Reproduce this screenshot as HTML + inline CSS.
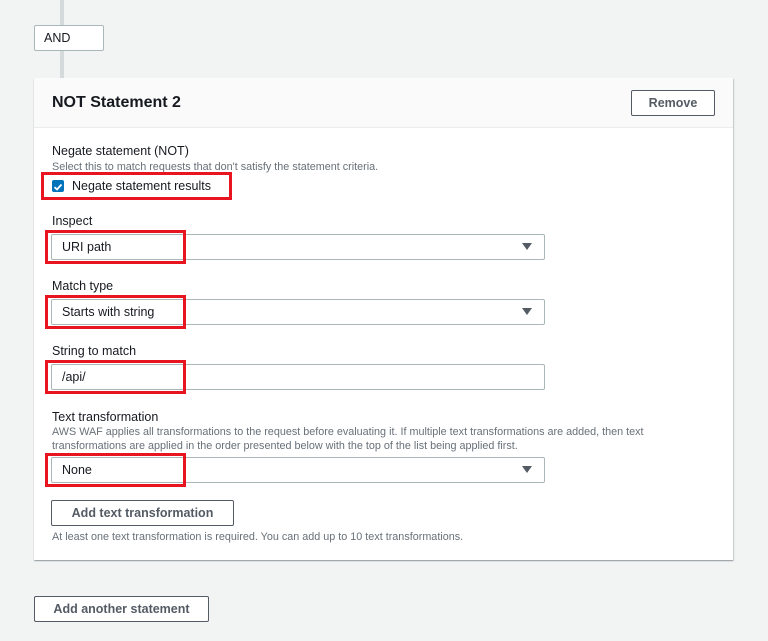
<!DOCTYPE html>
<html><head><meta charset="utf-8"><style>
*{box-sizing:border-box;margin:0;padding:0}
body{width:768px;height:641px;background:#f2f3f3;font-family:"Liberation Sans",sans-serif;color:#16191f;position:relative;overflow:hidden}
.a{position:absolute}
.btn{position:absolute;background:#fff;border:1px solid #545b64;border-radius:2px;font-weight:bold;color:#545b64;font-size:12.5px;text-align:center;line-height:25px}
.lbl{position:absolute;left:52px;font-size:12.5px;color:#16191f}
.desc{position:absolute;left:52px;font-size:10.8px;color:#687078;line-height:14px;white-space:nowrap}
.sel{position:absolute;left:51px;width:494px;height:26px;border:1px solid #aab7b8;border-radius:2px;background:#fff;font-size:12.5px;line-height:24px;padding-left:10px}
.arr{position:absolute;right:12px;top:8px;width:0;height:0;border-left:5px solid transparent;border-right:5px solid transparent;border-top:7px solid #545b64}
.red{position:absolute;border:3px solid #e8141f}
</style></head><body>
<div class="a" style="left:60px;top:0;width:4px;height:78px;background:#d5dbdb"></div>
<div class="a" style="left:34px;top:25px;width:70px;height:26px;background:#fff;border:1px solid #aab7b8;border-radius:2px;font-size:12.5px;line-height:24px;padding-left:9px">AND</div>
<div class="a" style="left:34px;top:78px;width:699px;height:482px;background:#fff;box-shadow:0 1px 1px rgba(0,28,36,.3),1px 1px 1px rgba(0,28,36,.15)">
<div class="a" style="left:0;top:0;width:699px;height:50px;background:#fafafa;border-bottom:1px solid #eaeded"></div>
<div class="a" style="left:18px;top:16px;font-size:16px;font-weight:bold">NOT Statement 2</div>
</div>
<div class="btn" style="left:631px;top:90px;width:84px;height:26px">Remove</div>
<div class="lbl" style="top:144px">Negate statement (NOT)</div>
<div class="desc" style="top:160px">Select this to match requests that don't satisfy the statement criteria.</div>
<div class="a" style="left:52px;top:180px;width:12px;height:12px;background:#0073bb;border-radius:2px"><svg width="12" height="12" viewBox="0 0 12 12"><path d="M2.5 6.2 L5 8.5 L9.5 3.5" stroke="#fff" stroke-width="1.8" fill="none"/></svg></div>
<div class="a" style="left:72px;top:179px;font-size:12.5px">Negate statement results</div>
<div class="red" style="left:41px;top:172px;width:191px;height:28px"></div>

<div class="lbl" style="top:214px">Inspect</div>
<div class="sel" style="top:234px">URI path<div class="arr"></div></div>
<div class="red" style="left:45px;top:230px;width:141px;height:34px"></div>

<div class="lbl" style="top:279px">Match type</div>
<div class="sel" style="top:299px">Starts with string<div class="arr"></div></div>
<div class="red" style="left:45px;top:295px;width:141px;height:34px"></div>

<div class="lbl" style="top:344px">String to match</div>
<div class="sel" style="top:364px">/api/</div>
<div class="red" style="left:45px;top:360px;width:141px;height:34px"></div>

<div class="lbl" style="top:410px">Text transformation</div>
<div class="desc" style="top:425px">AWS WAF applies all transformations to the request before evaluating it. If multiple text transformations are added, then text<br>transformations are applied in the order presented below with the top of the list being applied first.</div>
<div class="sel" style="top:457px">None<div class="arr"></div></div>
<div class="red" style="left:45px;top:453px;width:141px;height:34px"></div>

<div class="btn" style="left:51px;top:500px;width:183px;height:26px">Add text transformation</div>
<div class="desc" style="top:530px">At least one text transformation is required. You can add up to 10 text transformations.</div>

<div class="btn" style="left:34px;top:596px;width:175px;height:26px">Add another statement</div>
</body></html>
